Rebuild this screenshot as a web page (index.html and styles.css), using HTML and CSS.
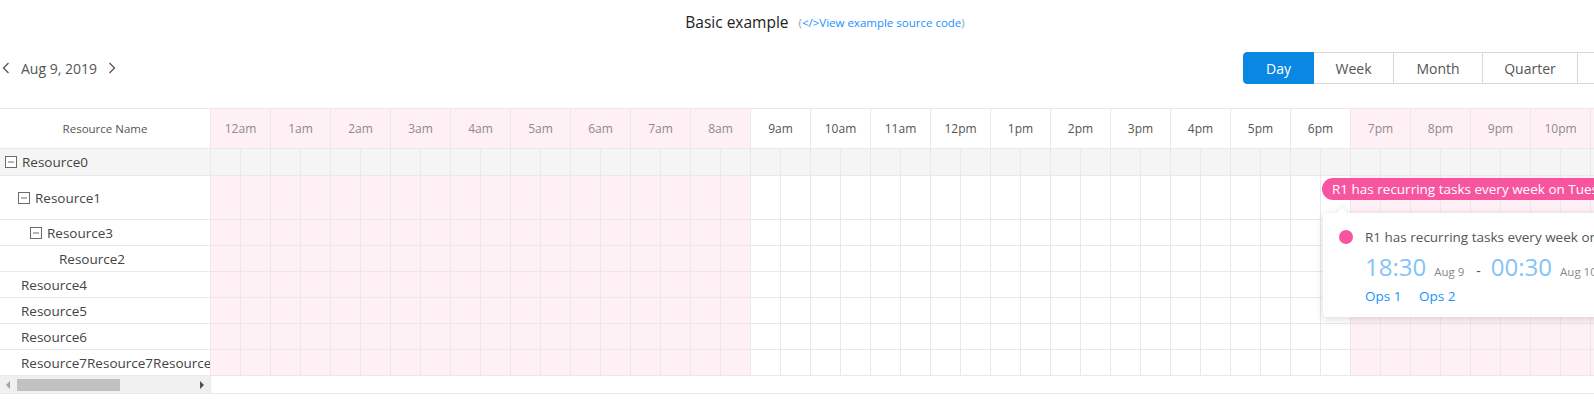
FILE: index.html
```html
<!DOCTYPE html>
<html lang="en">
<head>
    <meta charset="UTF-8">
    <title>Basic example</title>
    <link rel="stylesheet" href="styles.css">
</head>
<body>
    <div class="page">
        <div class="title-bar">
            <span class="title">Basic example</span>
            <span class="src-link">(<a href="#">&lt;/&gt;View example source code</a>)</span>
        </div>

        <div class="toolbar">
            <div class="date-nav">
                <svg class="chevron prev" width="8" height="12" viewBox="0 0 8 12"><polyline points="6.5,1 1.5,6 6.5,11" /></svg>
                <span class="date-label">Aug 9, 2019</span>
                <svg class="chevron next" width="8" height="12" viewBox="0 0 8 12"><polyline points="1.5,1 6.5,6 1.5,11" /></svg>
            </div>
            <div class="views">
                <button class="view-day active">Day</button>
                <button class="view-week">Week</button>
                <button class="view-month">Month</button>
                <button class="view-quarter">Quarter</button>
                <button class="view-year">Year</button>
            </div>
        </div>

        <div class="scheduler">
            <div class="res-pane">
                <div class="res-head">Resource Name</div>
                <div class="res-row row-group lvl0">
                    <svg class="toggle" width="12" height="12" viewBox="0 0 12 12"><rect x="0.5" y="0.5" width="11" height="11" /><line x1="3" y1="6" x2="9" y2="6" /></svg>
                    <span>Resource0</span>
                </div>
                <div class="res-row row-tall lvl1">
                    <svg class="toggle" width="12" height="12" viewBox="0 0 12 12"><rect x="0.5" y="0.5" width="11" height="11" /><line x1="3" y1="6" x2="9" y2="6" /></svg>
                    <span>Resource1</span>
                </div>
                <div class="res-row lvl2">
                    <svg class="toggle" width="12" height="12" viewBox="0 0 12 12"><rect x="0.5" y="0.5" width="11" height="11" /><line x1="3" y1="6" x2="9" y2="6" /></svg>
                    <span>Resource3</span>
                </div>
                <div class="res-row lvl3"><span>Resource2</span></div>
                <div class="res-row leaf"><span>Resource4</span></div>
                <div class="res-row leaf"><span>Resource5</span></div>
                <div class="res-row leaf"><span>Resource6</span></div>
                <div class="res-row leaf"><span>Resource7Resource7Resource7Resource7</span></div>
                <div class="hscroll">
                    <span class="arrow-left"></span>
                    <span class="thumb"></span>
                    <span class="arrow-right"></span>
                </div>
            </div>

            <div class="grid-pane">
                <div id="grid-head" class="grid-head"></div>
                <div id="grid-body"></div>
                <div class="grid-foot"></div>

                <div class="event">R1 has recurring tasks every week on Tuesday, Wednesday</div>

                <div class="popover">
                    <div class="popover-arrow"></div>
                    <div class="pop-title">
                        <span class="dot"></span>
                        <span>R1 has recurring tasks every week on Tuesday, Wednesday</span>
                    </div>
                    <div class="pop-time">
                        <span class="time">18:30</span>
                        <span class="day">Aug 9</span>
                        <span class="dash">-</span>
                        <span class="time">00:30</span>
                        <span class="day">Aug 10</span>
                    </div>
                    <div class="pop-ops">
                        <a href="#">Ops 1</a>
                        <a href="#">Ops 2</a>
                    </div>
                </div>
            </div>
        </div>
    </div>

    <script>
        var head = document.getElementById("grid-head");
        for (let h = 0; h < 24; h++) {
            let label = h == 0 ? "12am" : h < 12 ? h + "am" : h == 12 ? "12pm" : (h - 12) + "pm";
            let cell = document.createElement("div");
            cell.className = "hour-cell";
            if (h < 9 || h >= 19) cell.classList.add("off");
            cell.textContent = label;
            head.appendChild(cell);
        }

        // one entry per resource row, same order as the left pane
        var rows = ["row-group", "row-tall", "", "", "", "", "", ""];
        var body = document.getElementById("grid-body");
        rows.forEach(function (kind) {
            let row = document.createElement("div");
            row.className = "grid-row " + kind;
            for (let i = 0; i < 48; i++) {
                let cell = document.createElement("div");
                cell.className = "cell";
                if (kind != "row-group" && (i < 18 || i >= 38)) cell.classList.add("off");
                row.appendChild(cell);
            }
            body.appendChild(row);
        });
    </script>
</body>
</html>
```

FILE: styles.css
```css
html, body {
    margin: 0;
    padding: 0;
    overflow: hidden;
}

body {
    font-family: "Open Sans", Arial, sans-serif;
    color: #444;
    background: #fff;
}

.page {
    width: 1650px;
}

/* title */
.title-bar {
    height: 44px;
    display: flex;
    justify-content: center;
    align-items: center;
}

.title {
    font-size: 15.5px;
    font-weight: 500;
    color: #222;
}

.src-link {
    font-size: 11.5px;
    color: #8fa3bd;
    margin-left: 10px;
    margin-top: 1px;
}

.src-link a {
    color: #1890ff;
    text-decoration: none;
}

/* toolbar */
.toolbar {
    display: flex;
    justify-content: space-between;
    align-items: center;
    height: 32px;
    padding-top: 8px;
    margin-bottom: 24px;
}

.date-nav {
    display: flex;
    align-items: center;
    font-size: 14px;
    color: #555;
}

.chevron polyline {
    fill: none;
    stroke: #555;
    stroke-width: 1.3;
}

.chevron.prev {
    margin-left: 2px;
}

.date-label {
    margin: 0 11px 0 11px;
}

.views {
    display: flex;
}

.views button {
    height: 32px;
    padding: 0;
    border: 1px solid #d9d9d9;
    border-left: none;
    background: #fff;
    font-family: "Open Sans", Arial, sans-serif;
    font-size: 14px;
    color: #555;
}

.views button:first-child {
    border-left: 1px solid #d9d9d9;
    border-radius: 4px 0 0 4px;
}

.views button:last-child {
    border-radius: 0 4px 4px 0;
}

.views button.active {
    background: #0a87e3;
    border-color: #0a87e3;
    color: #fff;
}

.view-day { width: 71px; }
.view-week { width: 80px; }
.view-month { width: 89px; }
.view-quarter { width: 95px; }
.view-year { width: 72px; }

/* scheduler table */
.scheduler {
    display: flex;
    border-top: 1px solid #e9e9e9;
}

.res-pane {
    width: 210px;
    flex: none;
    border-right: 1px solid #e9e9e9;
}

.grid-pane {
    position: relative;
    width: 1440px;
    flex: none;
}

.res-head,
.grid-head {
    height: 40px;
    box-sizing: border-box;
    border-bottom: 1px solid #e9e9e9;
}

.res-head {
    display: flex;
    align-items: center;
    justify-content: center;
    font-size: 11.5px;
    color: #555;
}

.grid-head {
    display: flex;
}

.hour-cell {
    width: 60px;
    flex: none;
    box-sizing: border-box;
    border-right: 1px solid #e9e9e9;
    display: flex;
    align-items: center;
    justify-content: center;
    font-size: 12px;
    color: #555;
}

.hour-cell.off {
    background: #fff0f5;
    color: #8c8c8c;
}

.res-row,
.grid-row {
    height: 26px;
    box-sizing: border-box;
    border-bottom: 1px solid #e9e9e9;
}

.row-group {
    height: 27px;
    background: #f5f5f5;
}

.row-tall {
    height: 44px;
}

.res-row {
    display: flex;
    align-items: center;
    white-space: nowrap;
    overflow: hidden;
    font-size: 13.5px;
    color: #444;
}

.res-row .toggle {
    flex: none;
    margin-right: 5px;
}

.toggle rect {
    fill: #fff;
    stroke: #6b6b6b;
}

.toggle line {
    stroke: #6b6b6b;
}

.lvl0 { padding-left: 5px; }
.lvl1 { padding-left: 18px; }
.lvl2 { padding-left: 30px; }
.lvl3 { padding-left: 59px; }
.leaf { padding-left: 21px; }

.grid-row {
    display: flex;
}

.cell {
    width: 30px;
    flex: none;
    box-sizing: border-box;
    border-right: 1px solid #e9e9e9;
}

.cell.off {
    background: #fff0f5;
}

/* bottom scrollbar row */
.hscroll,
.grid-foot {
    height: 18px;
    box-sizing: border-box;
    border-bottom: 1px solid #e9e9e9;
}

.hscroll {
    display: flex;
    align-items: center;
    background: #f0f0f0;
}

.arrow-left {
    width: 0;
    height: 0;
    margin-left: 6px;
    border-top: 4px solid transparent;
    border-bottom: 4px solid transparent;
    border-right: 4px solid #a3a3a3;
}

.thumb {
    width: 103px;
    height: 12px;
    margin-left: 7px;
    background: #c1c1c1;
}

.arrow-right {
    width: 0;
    height: 0;
    margin-left: auto;
    margin-right: 6px;
    border-top: 4px solid transparent;
    border-bottom: 4px solid transparent;
    border-left: 4px solid #505050;
}

/* event + popover */
.event {
    position: absolute;
    left: 1111px;
    top: 69px;
    width: 600px;
    height: 22px;
    line-height: 22px;
    padding-left: 10px;
    border-radius: 11px;
    background: #f7559f;
    color: #fff;
    font-size: 13.5px;
    white-space: nowrap;
}

.popover {
    position: absolute;
    left: 1112px;
    top: 104px;
    width: 440px;
    height: 104px;
    box-sizing: border-box;
    padding-top: 12px;
    background: #fff;
    border-radius: 4px;
    box-shadow: 0 2px 8px rgba(0, 0, 0, 0.15);
    white-space: nowrap;
}

.popover-arrow {
    position: absolute;
    left: 15px;
    top: -4px;
    width: 8px;
    height: 8px;
    background: #fff;
    transform: rotate(45deg);
    box-shadow: -2px -2px 5px rgba(0, 0, 0, 0.06);
}

.pop-title {
    display: flex;
    align-items: center;
    height: 24px;
    font-size: 13.5px;
    color: #555;
}

.dot {
    width: 14px;
    height: 14px;
    border-radius: 50%;
    background: #f7559f;
    margin: 0 12px 0 16px;
}

.pop-time {
    display: flex;
    align-items: baseline;
    height: 36px;
    line-height: 36px;
    padding-left: 42px;
    color: #555;
}

.pop-time .time {
    font-size: 24px;
    color: #84c3f6;
}

.pop-time .day {
    font-size: 11.5px;
    color: #888;
    margin-left: 8px;
}

.pop-time .dash {
    font-size: 14px;
    margin: 0 10px 0 12px;
}

.pop-ops {
    height: 22px;
    line-height: 22px;
    padding-left: 42px;
    font-size: 13.5px;
}

.pop-ops a {
    color: #1890ff;
    text-decoration: none;
    margin-right: 14px;
}
```
